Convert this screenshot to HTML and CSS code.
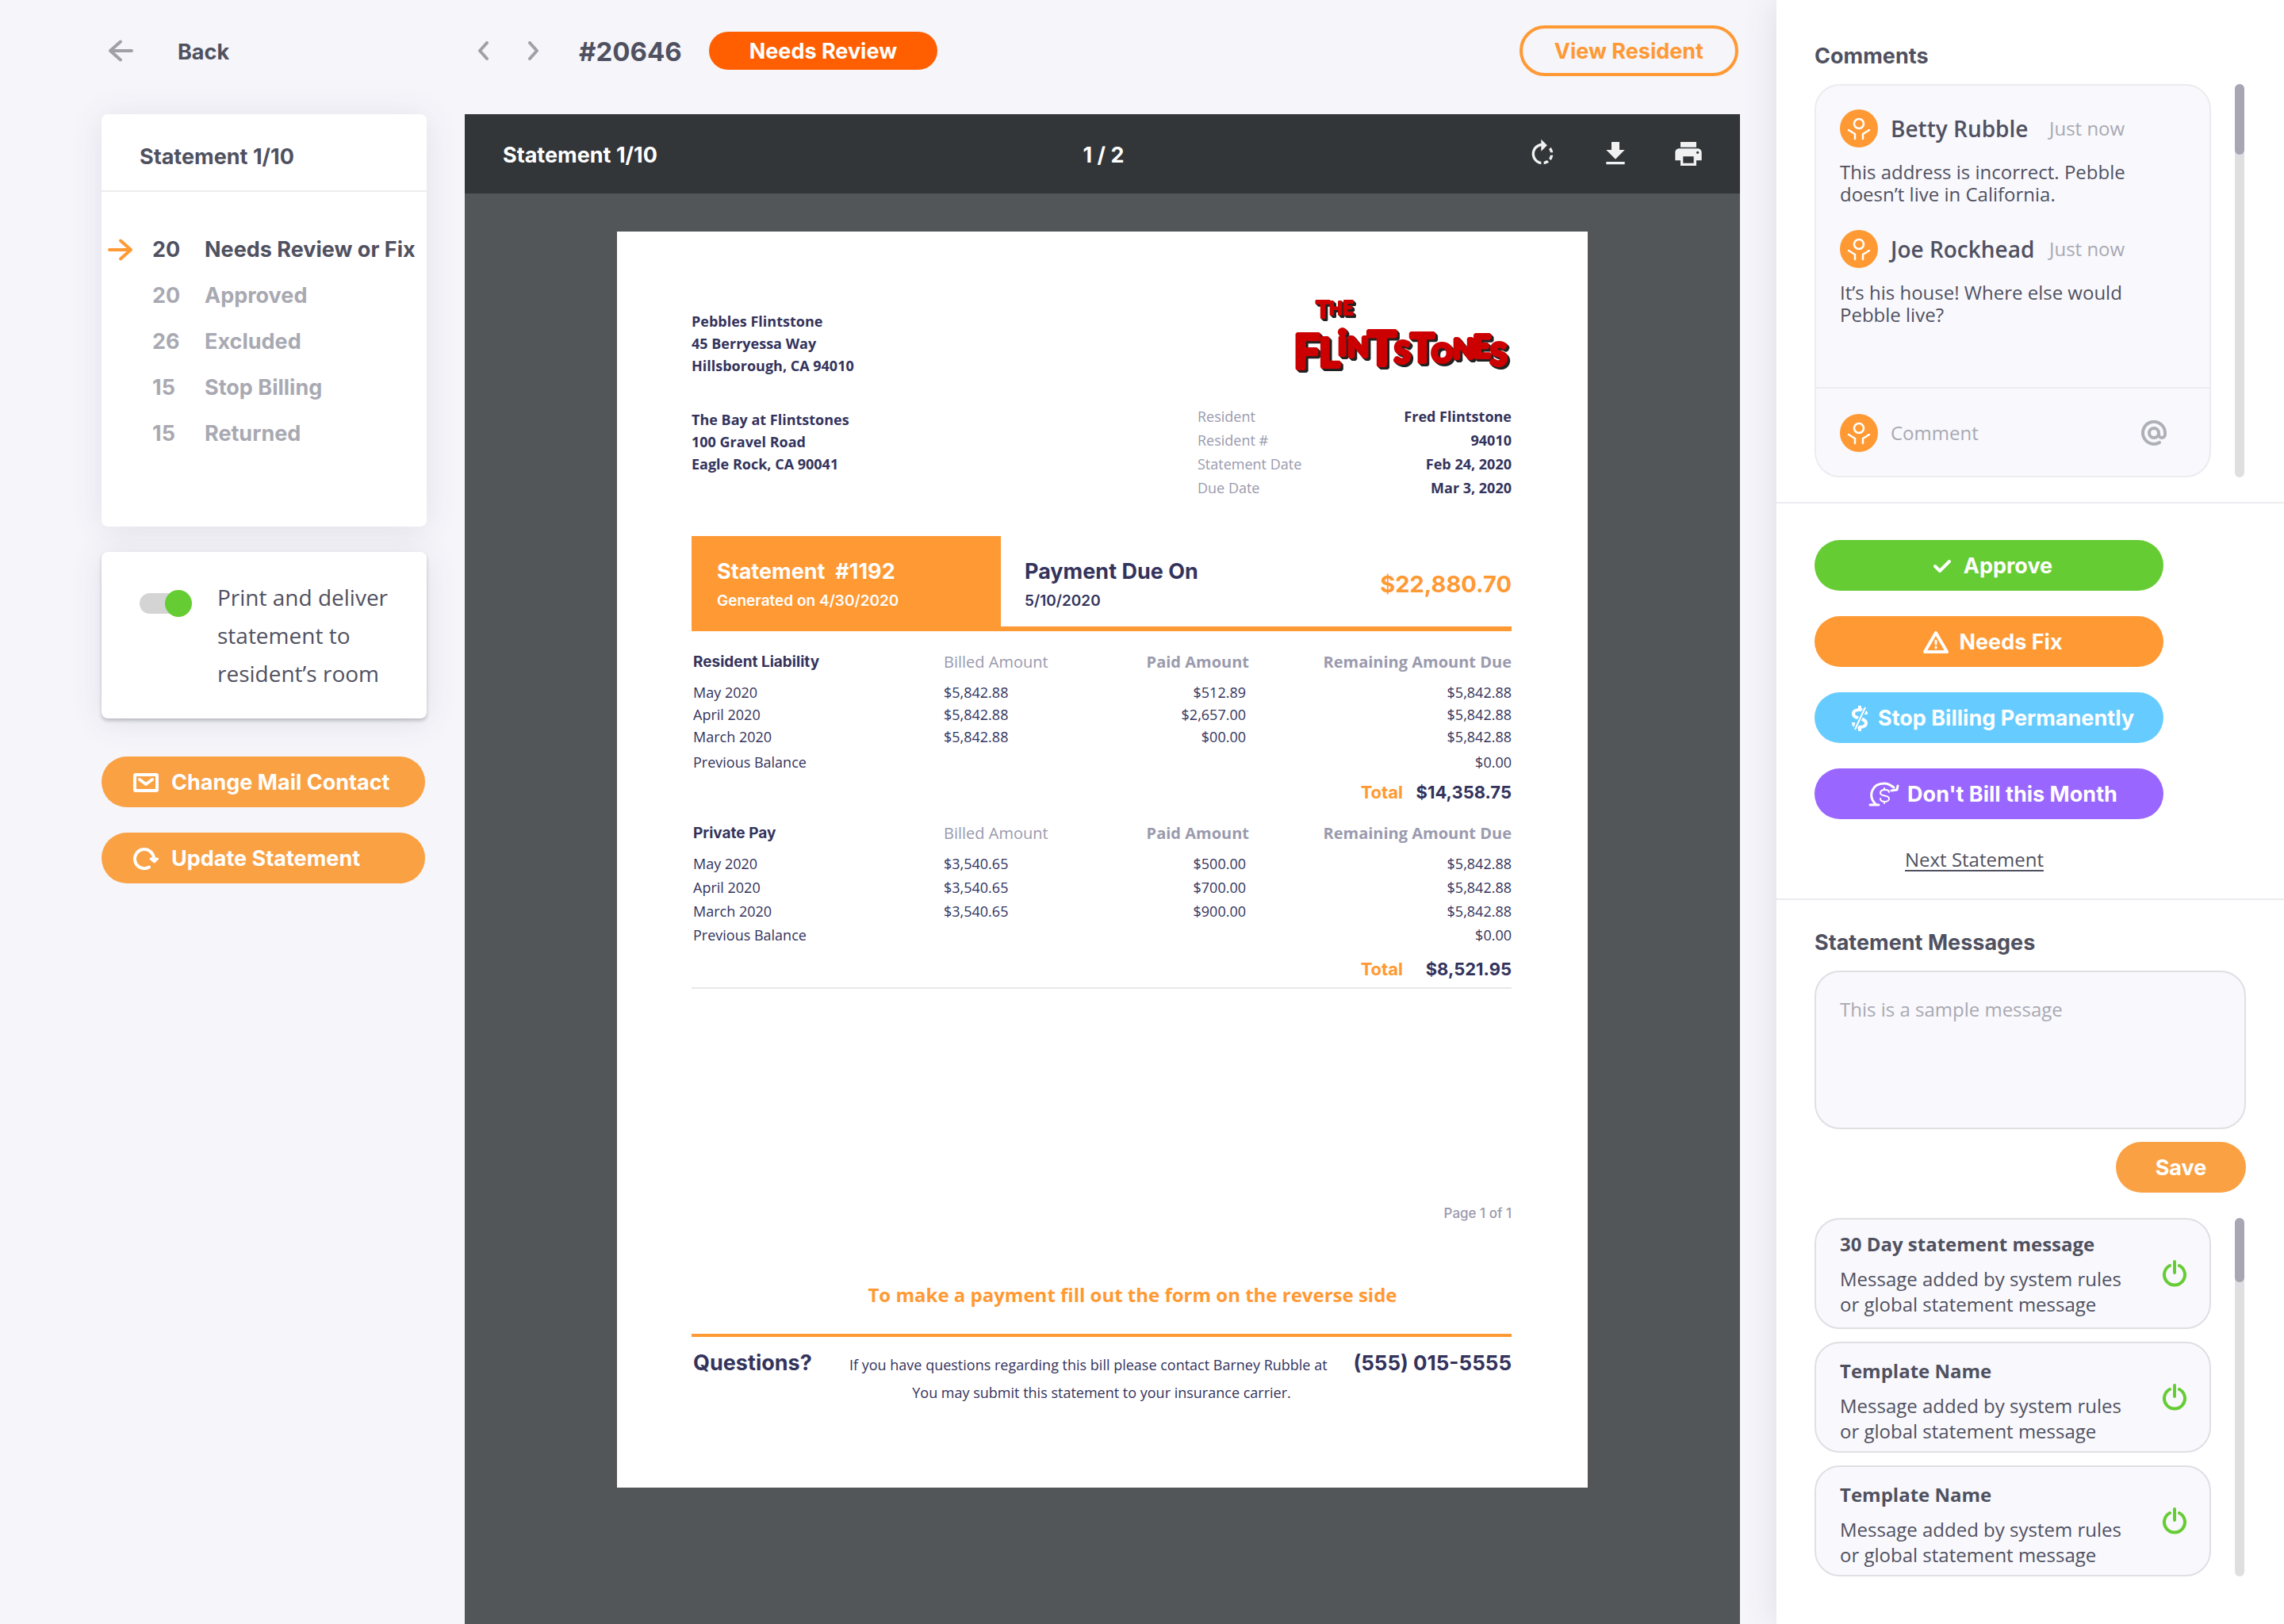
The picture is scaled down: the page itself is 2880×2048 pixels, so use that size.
FILE: index.html
```html
<!DOCTYPE html>
<html lang="en">
<head>
    <meta charset="UTF-8">
    <meta name="viewport" content="width=device-width, initial-scale=1.0">
    <title>Statement #20646</title>
    <link rel="stylesheet" href="styles.css">
</head>
<body>

<!-- Shared icons -->
<svg class="sprite" aria-hidden="true">
    <symbol id="icon-person" viewBox="0 0 48 48">
        <circle cx="24" cy="24" r="24" fill="#ff9933"/>
        <g fill="none" stroke="#fff" stroke-width="2.500" stroke-linecap="round" stroke-linejoin="round">
            <circle cx="24" cy="18" r="6"/>
            <path d="M11 26l8 5v6M37 26l-8 5v6"/>
        </g>
    </symbol>
    <symbol id="icon-power" viewBox="0 0 32 34">
        <path d="M10 7A13 13 0 1 0 22 7M16 2v14" fill="none" stroke="#66cc33" stroke-width="4" stroke-linecap="round"/>
    </symbol>
</svg>

<div class="app">
    <main class="main">
        <aside class="left">
            <a class="back" href="#">
                <svg width="32" height="32" viewBox="0 0 32 32" class="arrow"><path d="M30 16H3M16 4.5L3 16l13 11.5"/></svg>
                <span>Back</span>
            </a>

            <section class="card status-card">
                <h2 class="status-title">Statement 1/10</h2>
                <ul class="status-list">
                    <li class="active">
                        <svg width="32" height="32" viewBox="0 0 32 32" class="arrow"><path d="M2 16h27M16 4.5L29 16 16 27.5"/></svg>
                        <span class="count">20</span><span>Needs Review or Fix</span>
                    </li>
                    <li><span class="count">20</span><span>Approved</span></li>
                    <li><span class="count">26</span><span>Excluded</span></li>
                    <li><span class="count">15</span><span>Stop Billing</span></li>
                    <li><span class="count">15</span><span>Returned</span></li>
                </ul>
            </section>

            <section class="card print-card">
                <input type="checkbox" class="toggle" id="printToggle" checked>
                <label for="printToggle">Print and deliver statement to resident’s room</label>
            </section>

            <div class="left-actions">
                <button class="btn btn-side">
                    <svg width="32" height="32" viewBox="0 0 32 32" fill="none" stroke="#fff" stroke-width="4" stroke-linecap="round" stroke-linejoin="round"><rect x="2" y="6" width="28" height="20" rx="1"/><path d="M8 12l8 6 8-6"/></svg>
                    Change Mail Contact
                </button>
                <button class="btn btn-side">
                    <svg width="32" height="32" viewBox="0 0 32 32" fill="none" stroke="#fff" stroke-width="4" stroke-linecap="round"><path d="M20 26.5A12 12 0 1 1 26 16"/><path d="M22 16l4.500 4 4-4z" fill="#fff" stroke-width="3" stroke-linejoin="round"/></svg>
                    Update Statement
                </button>
            </div>
        </aside>

        <section class="center">
            <header class="topbar">
                <button class="nav-btn" aria-label="Previous"><svg width="14" height="24" viewBox="0 0 14 24"><path d="M12 2L3 12l9 10"/></svg></button>
                <button class="nav-btn" aria-label="Next"><svg width="14" height="24" viewBox="0 0 14 24"><path d="M2 2l9 10-9 10"/></svg></button>
                <h1>#20646</h1>
                <span class="pill">Needs Review</span>
                <button class="btn btn-outline">View Resident</button>
            </header>

            <div class="viewer">
                <div class="toolbar">
                    <span>Statement 1/10</span>
                    <span>1 / 2</span>
                    <div class="tools">
                        <button aria-label="Rotate"><svg width="40" height="40" viewBox="0 0 24 24"><path d="M15.55 5.55L11 1v3.070C7.060 4.560 4 7.920 4 12s3.050 7.440 7 7.930v-2.020c-2.840-.48-5-2.940-5-5.910s2.160-5.430 5-5.910V10l4.550-4.450zM19.930 11c-.17-1.390-.72-2.730-1.620-3.890l-1.420 1.420c.54.75.88 1.600 1.020 2.470h2.020zM13 17.900v2.020c1.390-.17 2.740-.71 3.900-1.610l-1.440-1.440c-.75.54-1.590.89-2.460 1.030zm3.890-2.420l1.420 1.410c.9-1.160 1.450-2.500 1.620-3.890h-2.020c-.14.87-.48 1.720-1.020 2.480z"/></svg></button>
                        <button aria-label="Download"><svg width="40" height="40" viewBox="0 0 24 24"><path d="M19 9h-4V3H9v6H5l7 7 7-7zM5 18v2h14v-2H5z"/></svg></button>
                        <button aria-label="Print"><svg width="40" height="40" viewBox="0 0 24 24"><path d="M19 8H5c-1.660 0-3 1.340-3 3v6h4v4h12v-4h4v-6c0-1.660-1.340-3-3-3zm-3 11H8v-5h8v5zm3-7c-.55 0-1-.45-1-1s.45-1 1-1 1 .45 1 1-.45 1-1 1zm-1-9H6v4h12V3z"/></svg></button>
                    </div>
                </div>

                <article class="page">
                    <div class="page-head">
                        <div class="addresses">
                            <address>Pebbles Flintstone<br>45 Berryessa Way<br>Hillsborough, CA 94010</address>
                            <address>The Bay at Flintstones<br>100 Gravel Road<br>Eagle Rock, CA 90041</address>
                        </div>
                        <div class="page-meta">
                            <svg class="logo" width="276" height="100" viewBox="0 0 276 100" role="img" aria-label="The Flintstones">
                                <text class="logo-small"><tspan x="29" y="26" font-size="30">T</tspan><tspan x="46" y="22" font-size="22">H</tspan><tspan x="63" y="22" font-size="24">E</tspan></text>
                                <text><tspan x="1" y="90" font-size="60">F</tspan><tspan x="33" y="88" font-size="51">L</tspan><tspan x="57" y="73" font-size="44">i</tspan><tspan x="69" y="75" font-size="35">N</tspan><tspan x="94" y="86" font-size="61">T</tspan><tspan x="128" y="83" font-size="37">S</tspan><tspan x="148" y="82" font-size="51">T</tspan><tspan x="175" y="82" font-size="33">O</tspan><tspan x="202" y="77" font-size="35">N</tspan><tspan x="227" y="76" font-size="40">E</tspan><tspan x="249" y="86" font-size="39">S</tspan></text>
                            </svg>
                            <dl>
                                <div><dt>Resident</dt><dd>Fred Flintstone</dd></div>
                                <div><dt>Resident #</dt><dd>94010</dd></div>
                                <div><dt>Statement Date</dt><dd>Feb 24, 2020</dd></div>
                                <div><dt>Due Date</dt><dd>Mar 3, 2020</dd></div>
                            </dl>
                        </div>
                    </div>

                    <div class="band">
                        <div class="band-statement">
                            <strong>Statement&nbsp; #1192</strong>
                            <span>Generated on 4/30/2020</span>
                        </div>
                        <div class="band-due">
                            <strong>Payment Due On</strong>
                            <span>5/10/2020</span>
                        </div>
                        <div class="band-amount">$22,880.70</div>
                    </div>

                    <table class="bill">
                        <colgroup><col class="col-name"><col class="col-billed"><col class="col-paid"><col></colgroup>
                        <thead>
                            <tr><th>Resident Liability</th><th>Billed Amount</th><th>Paid Amount</th><th>Remaining Amount Due</th></tr>
                        </thead>
                        <tbody>
                            <tr><td>May 2020</td><td>$5,842.88</td><td>$512.89</td><td>$5,842.88</td></tr>
                            <tr><td>April 2020</td><td>$5,842.88</td><td>$2,657.00</td><td>$5,842.88</td></tr>
                            <tr><td>March 2020</td><td>$5,842.88</td><td>$00.00</td><td>$5,842.88</td></tr>
                            <tr class="previous"><td>Previous Balance</td><td></td><td></td><td>$0.00</td></tr>
                        </tbody>
                        <tfoot>
                            <tr><td colspan="4"><span class="total-label">Total</span><span class="total">$14,358.75</span></td></tr>
                        </tfoot>
                    </table>

                    <table class="bill bill-private">
                        <colgroup><col class="col-name"><col class="col-billed"><col class="col-paid"><col></colgroup>
                        <thead>
                            <tr><th>Private Pay</th><th>Billed Amount</th><th>Paid Amount</th><th>Remaining Amount Due</th></tr>
                        </thead>
                        <tbody>
                            <tr><td>May 2020</td><td>$3,540.65</td><td>$500.00</td><td>$5,842.88</td></tr>
                            <tr><td>April 2020</td><td>$3,540.65</td><td>$700.00</td><td>$5,842.88</td></tr>
                            <tr><td>March 2020</td><td>$3,540.65</td><td>$900.00</td><td>$5,842.88</td></tr>
                            <tr class="previous"><td>Previous Balance</td><td></td><td></td><td>$0.00</td></tr>
                        </tbody>
                        <tfoot>
                            <tr><td colspan="4"><span class="total-label">Total</span><span class="total">$8,521.95</span></td></tr>
                        </tfoot>
                    </table>

                    <p class="page-number">Page 1 of 1</p>
                    <p class="pay-note">To make a payment fill out the form on the reverse side</p>
                    <footer class="page-foot">
                        <div class="questions">
                            <strong>Questions?</strong>
                            <span>If you have questions regarding this bill please contact Barney Rubble at</span>
                            <strong class="phone">(555) 015-5555</strong>
                        </div>
                        <p>You may submit this statement to your insurance carrier.</p>
                    </footer>
                </article>
            </div>
        </section>
    </main>

    <aside class="sidebar">
        <section class="comments">
            <h2>Comments</h2>
            <div class="scroll-row">
                <div class="comment-box">
                    <div class="comment-list">
                        <div class="comment">
                            <div class="comment-head"><svg width="48" height="48"><use href="#icon-person"/></svg><b>Betty Rubble</b><time>Just now</time></div>
                            <p>This address is incorrect. Pebble doesn’t live in California.</p>
                        </div>
                        <div class="comment">
                            <div class="comment-head"><svg width="48" height="48"><use href="#icon-person"/></svg><b>Joe Rockhead</b><time>Just now</time></div>
                            <p>It’s his house! Where else would Pebble live?</p>
                        </div>
                    </div>
                    <div class="comment-new">
                        <svg width="48" height="48"><use href="#icon-person"/></svg>
                        <input type="text" placeholder="Comment" aria-label="Comment">
                        <button aria-label="Mention"><svg width="32" height="32" viewBox="0 0 32 32" fill="none" stroke="#afafb7" stroke-width="4" stroke-linecap="round"><circle cx="16" cy="16" r="6"/><path d="M22 16v2a4 4 0 0 0 8 0v-2a14 14 0 1 0-7 12"/></svg></button>
                    </div>
                </div>
                <div class="scrollbar"><div class="thumb"></div></div>
            </div>
        </section>

        <section class="actions">
            <button class="btn btn-approve">
                <svg width="22" height="18" viewBox="0 0 22 18" fill="none" stroke="#fff" stroke-width="4" stroke-linecap="round" stroke-linejoin="round"><path d="M2 9l6 6L20 3"/></svg>
                Approve
            </button>
            <button class="btn btn-fix">
                <svg width="32" height="28" viewBox="0 0 32 28" fill="none" stroke="#fff" stroke-width="4" stroke-linecap="round" stroke-linejoin="round"><path d="M16 2l14 24H2z"/><path d="M16 12v4M16 20v1" stroke-width="3"/></svg>
                Needs Fix
            </button>
            <button class="btn btn-stop">
                <svg width="20" height="32" viewBox="0 0 20 32" fill="none" stroke="#fff" stroke-width="4"><path d="M18 11c0-4-3-6-8-6s-8 2-8 5c0 8 16 4 16 12 0 3-3 5-8 5s-8-2-8-6M10 0v6M10 26v6"/><path d="M18 1L3 31" stroke="#66ccff" stroke-width="5"/><path d="M17 2L4 30" stroke-width="2"/></svg>
                Stop Billing Permanently
            </button>
            <button class="btn btn-skip">
                <svg width="39" height="32" viewBox="0 0 39 32" fill="none" stroke="#fff" stroke-width="3" stroke-linecap="round" stroke-linejoin="round"><path d="M2 29h11M9 28C-1 18 4 2 20 2c5 0 8 2 12 5M37 5l-1 5-7 1"/><path d="M26 13c0-2-2-3-5-3s-6 1-6 4c0 5 11 2 11 7 0 2-2 4-5 4s-6-1-6-4M20 8v2M20 25v2" stroke-width="2"/></svg>
                Don't Bill this Month
            </button>
            <a class="next-link" href="#">Next Statement</a>
        </section>

        <section class="messages">
            <h2><label for="messageInput">Statement Messages</label></h2>
            <textarea id="messageInput" placeholder="This is a sample message"></textarea>
            <button class="btn btn-save">Save</button>
            <div class="scroll-row">
                <div class="message-list">
                    <div class="message">
                        <div class="message-text"><h3>30 Day statement message</h3><p>Message added by system rules or global statement message</p></div>
                        <button aria-label="Turn off"><svg width="32" height="34"><use href="#icon-power"/></svg></button>
                    </div>
                    <div class="message">
                        <div class="message-text"><h3>Template Name</h3><p>Message added by system rules or global statement message</p></div>
                        <button aria-label="Turn off"><svg width="32" height="34"><use href="#icon-power"/></svg></button>
                    </div>
                    <div class="message">
                        <div class="message-text"><h3>Template Name</h3><p>Message added by system rules or global statement message</p></div>
                        <button aria-label="Turn off"><svg width="32" height="34"><use href="#icon-power"/></svg></button>
                    </div>
                </div>
                <div class="scrollbar"><div class="thumb"></div></div>
            </div>
        </section>
    </aside>
</div>

</body>
</html>
```
FILE: styles.css
```css
:root {
    --bg: #f5f5fa;
    --text: #505160;
    --muted: #a9a9b2;
    --navy: #33335c;
    --orange: #ff9933;
    --head: Inter, "Liberation Sans", sans-serif;
    --body: "Open Sans", "Noto Sans", sans-serif;
}

* { box-sizing: border-box; }
body { margin: 0; background: var(--bg); color: var(--text); font-family: var(--body); font-size: 24px; line-height: 28px; }
h1, h2, h3, p, ul, dl, dd { margin: 0; padding: 0; }
h2 { font: 700 27px/36px var(--head); }
button { border: none; background: none; padding: 0; font: inherit; color: inherit; cursor: pointer; }
svg { display: block; flex: none; }
.sprite { position: absolute; width: 0; height: 0; }

.app { display: flex; min-height: 100vh; }
.main { flex: 1; display: grid; grid-template-columns: 410px 1fr; gap: 48px; padding: 0 46px 0 128px; }

/* Buttons */
.btn { display: flex; align-items: center; justify-content: center; gap: 13px; height: 64px; padding-top: 2px; border-radius: 32px; color: white; font: 700 27px/36px var(--head); }
.btn-side { justify-content: flex-start; gap: 16px; padding-left: 40px; background: #faa144; }
.btn-outline { margin: 0 2px 0 auto; padding: 2px 40px 0; border: 4px solid var(--orange); color: var(--orange); }
.actions .btn { padding-left: 10px; }
.btn-approve { gap: 16px; background: #66cc33; }
.btn-fix { background: var(--orange); }
.btn-stop { background: #66ccff; }
.btn-skip { gap: 10px; background: #9966ff; }
.btn-save { width: 164px; margin: 16px 0 32px auto; background: #faa144; }

/* Left column */
.back { display: flex; align-items: center; gap: 56px; height: 128px; margin-bottom: 16px; padding-left: 8px; color: var(--text); font: 700 27px/36px var(--head); text-decoration: none; }
.back span { padding-top: 4px; }
.arrow { fill: none; stroke: #a0a0a6; stroke-width: 4; stroke-linecap: round; stroke-linejoin: round; }
.card { background: white; border-radius: 8px; box-shadow: 0 4px 40px rgba(80, 81, 96, 0.12); }
.status-title { padding: 36px 48px 24px; border-bottom: 2px solid #ececf0; }
.status-list { list-style: none; padding: 44px 0 88px 64px; color: var(--muted); font: 700 27px/58px var(--head); }
.status-list li { display: flex; white-space: nowrap; }
.status-list .count { width: 66px; }
.status-list .active { color: var(--text); align-items: center; margin-left: -56px; }
.status-list .arrow { stroke: var(--orange); margin-right: 24px; }

.print-card { display: flex; gap: 32px; margin-top: 32px; padding: 33px 40px 33px 48px; font-size: 28px; line-height: 48px; box-shadow: 0 4px 40px rgba(80, 81, 96, 0.12), 0 3px 4px rgba(80, 81, 96, 0.3); }
.toggle { appearance: none; position: relative; flex: none; width: 66px; height: 34px; margin: 15px 0 0; cursor: pointer; }
.toggle::before { content: ""; position: absolute; left: 0; top: 4px; width: 60px; height: 26px; border-radius: 13px; background: #d4d4d4; }
.toggle::after { content: ""; position: absolute; left: 0; top: 0; width: 34px; height: 34px; border-radius: 50%; background: #a9a9b2; }
.toggle:checked::after { left: 32px; background: #66cc33; }
.left-actions { display: grid; gap: 32px; margin: 48px 2px 0 0; }

/* Top bar */
.center { display: flex; flex-direction: column; }
.topbar { display: flex; align-items: center; height: 128px; margin-bottom: 16px; padding-left: 16px; }
.topbar h1 { margin: 0 34px 0 0; padding-top: 2px; font: 700 33px/48px var(--head); }
.nav-btn { margin-right: 50px; }
.nav-btn svg { fill: none; stroke: #a0a0a6; stroke-width: 4; stroke-linecap: round; stroke-linejoin: round; }
.pill { padding: 7px 51px 5px; border-radius: 24px; background: #ff5f00; color: white; font: 700 27px/36px var(--head); }

/* Document viewer */
.viewer { flex: 1; background: #525659; }
.toolbar { display: grid; grid-template-columns: 1fr auto 1fr; align-items: center; height: 100px; padding: 0 45px 0 48px; background: #323639; color: white; font: 700 27px/36px var(--head); }
.toolbar span { padding-top: 4px; }
.tools { display: flex; justify-content: flex-end; gap: 52px; }
.tools svg { fill: #f1f1f1; }

.page { max-width: 1224px; margin: 48px auto; padding: 83px 96px 106px 94px; background: white; color: var(--navy); font-size: 18px; line-height: 28px; }
.page-head { display: flex; justify-content: space-between; }
.addresses { padding-top: 16px; }
address { margin-bottom: 40px; font-style: normal; font-weight: 700; }
.page-meta { width: 396px; }
.page-meta dl { margin: 35px 0 46px; line-height: 30px; }
.page-meta dl div { display: flex; justify-content: space-between; }
.page-meta dt { color: #9a9aae; }
.page-meta dd { font-weight: 700; }
.logo { margin-left: auto; overflow: visible; filter: drop-shadow(1px 1px 0 #222) drop-shadow(2px 2px 0 #222); }
.logo text { font-family: Lato, "Liberation Sans", sans-serif; font-weight: 900; fill: #cc0000; stroke: #cc0000; stroke-width: 4; stroke-linejoin: bevel; }
.logo .logo-small { stroke-width: 2; }

.band { display: flex; height: 120px; font-family: var(--head); border-bottom: 6px solid var(--orange); }
.band strong { display: block; margin-bottom: 5px; font-size: 27px; line-height: 36px; }
.band span { font-size: 19px; font-weight: 600; }
.band-statement { width: 390px; padding: 27px 32px 0; background: var(--orange); color: white; }
.band-due { padding: 27px 30px 0; }
.band-amount { margin: 46px 0 0 auto; color: var(--orange); font-size: 29px; line-height: 30px; font-weight: 700; }

.bill { width: 100%; margin-top: 21px; table-layout: fixed; border-collapse: collapse; }
.bill-private { margin-top: 16px; padding-bottom: 5px; border-bottom: 2px solid #e8e8ec; line-height: 30px; }
.col-name { width: 318px; }
.col-billed { width: 200px; }
.col-paid { width: 185px; }
.bill th, .bill td { padding: 0; text-align: left; }
.bill th { padding-bottom: 6px; color: #9a9aae; font-size: 20px; line-height: 36px; font-weight: 700; }
.bill th:nth-child(1), .bill td:nth-child(1) { padding-left: 2px; }
.bill th:nth-child(1) { color: var(--navy); font: 700 19px/36px var(--head); }
.bill th:nth-child(2) { font-weight: 500; }
.bill th:nth-child(n+3), .bill td:nth-child(n+3), .bill tfoot td { text-align: right; }
.bill th:nth-child(4) { white-space: nowrap; }
.bill td:nth-child(3) { padding-right: 4px; }
.bill .previous td { padding-top: 4px; }
.bill tfoot td { padding-top: 6px; font: 700 24px/36px var(--head); }
.bill-private th { padding-bottom: 5px; }
.bill-private .previous td { padding-top: 0; }
.bill-private tfoot td { padding: 10px 0 5px; }
.total-label { color: var(--orange); font-size: 22px; }
.total { display: inline-block; width: 137px; font-size: 22px; }

.page-number { margin-top: 269px; color: #9a9aae; font: 500 17px/28px var(--head); text-align: right; }
.pay-note { margin: 71px 0 31px; padding-left: 78px; color: var(--orange); font-size: 24px; line-height: 36px; font-weight: 700; text-align: center; }
.page-foot { padding-top: 15px; border-top: 4px solid var(--orange); text-align: center; }
.questions { display: grid; grid-template-columns: 197px 1fr auto; align-items: baseline; margin-bottom: 5px; padding-left: 2px; text-align: left; }
.questions strong { font: 700 27px/36px var(--head); }
.questions .phone { font-size: 26px; }

/* Sidebar */
.sidebar { width: 640px; background: white; box-shadow: 0 0 40px rgba(80, 81, 96, 0.15); }
.sidebar section { padding: 0 48px; }
.sidebar h2 { margin-bottom: 17px; padding-top: 1px; }
.scroll-row { display: flex; gap: 30px; padding-right: 2px; }
.scrollbar { flex: none; width: 12px; border-radius: 6px; background: #dfdfe2; }
.thumb { height: 18%; border-radius: 6px; background: #a7a7b3; }

.sidebar .comments { padding-top: 52px; padding-bottom: 31px; border-bottom: 2px solid #ececf0; }
.comment-box { flex: 1; min-width: 0; border: 2px solid #ececf0; border-radius: 32px; background: #f8f8fd; }
.comment-list { padding: 30px 60px 46px 30px; }
.comment { margin-bottom: 31px; }
.comment-head { display: grid; grid-template-columns: 48px 184px auto; gap: 16px; align-items: center; margin-bottom: 17px; white-space: nowrap; }
.comment-head b { font-size: 28px; font-weight: 600; }
.comment-head time { color: var(--muted); }
.comment-new { display: flex; align-items: center; gap: 16px; padding: 32px 54px 30px 30px; border-top: 2px solid #ececf0; }
.comment-new input { flex: 1; min-width: 0; padding: 0; border: none; outline: none; background: none; color: var(--text); font: inherit; }
::placeholder { color: var(--muted); opacity: 1; }

.sidebar .actions { display: grid; grid-template-columns: 440px; gap: 32px; padding-top: 46px; padding-bottom: 31px; border-bottom: 2px solid #ececf0; }
.next-link { justify-self: start; margin: 1px 0 0 114px; color: var(--text); line-height: 36px; text-underline-offset: 4px; text-decoration-thickness: 2px; }

.sidebar .messages { padding-top: 35px; }
.messages textarea { display: block; width: 100%; height: 200px; padding: 33px 30px; border: 2px solid #dfdfe4; border-radius: 32px; outline: none; resize: none; background: #f8f8fd; color: var(--text); font: inherit; }
.message-list { flex: 1; display: grid; gap: 16px; }
.message { display: flex; justify-content: space-between; align-items: center; height: 140px; padding: 0 28px 0 30px; border: 2px solid #dfdfe4; border-radius: 32px; background: #f8f8fd; line-height: 32px; }
.message-text { width: 370px; padding-top: 10px; }
.message:first-child .message-text { padding-top: 2px; }
.message h3 { margin-bottom: 12px; font-size: 24px; line-height: 32px; }
```
